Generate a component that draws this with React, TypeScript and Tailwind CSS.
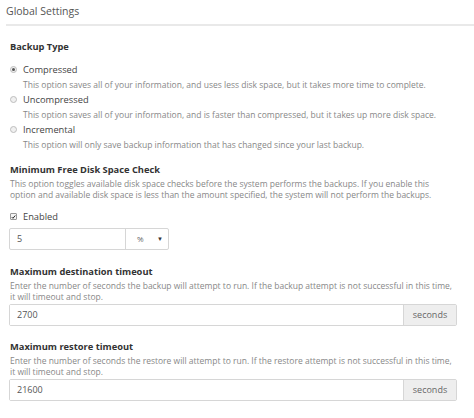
import React from "react";

function Radio({ checked }: { checked?: boolean }) {
  return (
    <span className="relative inline-flex w-[7px] h-[7px] rounded-full border border-[#bdbdbd] bg-[#f0f0f0] items-center justify-center shrink-0">
      {checked && <span className="w-[3px] h-[3px] rounded-full bg-[#555]" />}
    </span>
  );
}

function Check() {
  return (
    <span className="inline-flex w-[7px] h-[7px] border border-[#999] bg-[#f5f5f5] rounded-[1px] items-center justify-center shrink-0">
      <svg width="6" height="6" viewBox="0 0 8 8">
        <path d="M1.2 4.2 L3.1 6.1 L6.8 1.6" fill="none" stroke="#222" strokeWidth="1.6" />
      </svg>
    </span>
  );
}

function Option({ label, desc, checked }: { label: string; desc: string; checked?: boolean }) {
  return (
    <div>
      <div className="flex items-center h-[15px]">
        <Radio checked={checked} />
        <span className="ml-[6px] text-[9.3px] text-[#444]">{label}</span>
      </div>
      <div className="pl-[13px] text-[8.5px] leading-[15px] text-[#888] whitespace-nowrap">{desc}</div>
    </div>
  );
}

function Heading({ children, className = "" }: { children: React.ReactNode; className?: string }) {
  return <div className={"text-[9.3px] leading-[14px] font-bold text-[#333] " + className}>{children}</div>;
}

function Desc({ children, className = "" }: { children: React.ReactNode; className?: string }) {
  return <div className={"text-[8.5px] leading-[10.5px] text-[#888] whitespace-nowrap " + className}>{children}</div>;
}

function SecondsInput({ value, className = "" }: { value: string; className?: string }) {
  return (
    <div className={"flex h-[22px] w-[448px] ml-[-1px] border border-[#d6d6d6] rounded-[2px] " + className}>
      <div className="flex-1 flex items-center pl-[7px] text-[9px] text-[#555] bg-white">{value}</div>
      <div className="w-[53px] flex items-center justify-center border-l border-[#d6d6d6] bg-[#eeeeee] text-[9px] text-[#666]">
        seconds
      </div>
    </div>
  );
}

export default function App() {
  return (
    <div className="w-[474px] h-[418px] bg-white overflow-hidden" style={{ fontFamily: '"Open Sans", "Noto Sans", sans-serif' }}>
      <div className="ml-[6px] h-[26px] flex items-center border-b-2 border-[#e9e9e9] text-[10.5px] text-[#555]">
        Global Settings
      </div>
      <div className="pl-[10px]">
        <Heading className="mt-[14px]">Backup Type</Heading>
        <div className="mt-[8px]">
          <Option
            checked
            label="Compressed"
            desc="This option saves all of your information, and uses less disk space, but it takes more time to complete."
          />
          <Option
            label="Uncompressed"
            desc="This option saves all of your information, and is faster than compressed, but it takes up more disk space."
          />
          <Option
            label="Incremental"
            desc="This option will only save backup information that has changed since your last backup."
          />
        </div>

        <Heading className="mt-[11px]">Minimum Free Disk Space Check</Heading>
        <Desc className="mt-[2px]">
          This option toggles available disk space checks before the system performs the backups. If you enable this
          <br />
          option and available disk space is less than the amount specified, the system will not perform the backups.
        </Desc>
        <div className="mt-[9px] flex items-center h-[15px]">
          <Check />
          <span className="ml-[6px] text-[9.3px] text-[#444]">Enabled</span>
        </div>
        <div className="mt-[4px] flex h-[22px] w-[160px] ml-[-1px] border border-[#d6d6d6] rounded-[2px]">
          <div className="w-[115px] flex items-center pl-[7px] text-[9px] text-[#555]">5</div>
          <div className="flex-1 flex items-center border-l border-[#d6d6d6] pl-[11px] pr-[5px] text-[8px] text-[#666]">
            <span>%</span>
            <span className="ml-auto text-[6px] text-[#333]">▼</span>
          </div>
        </div>

        <Heading className="mt-[15px]">Maximum destination timeout</Heading>
        <Desc className="mt-[2px]">
          Enter the number of seconds the backup will attempt to run. If the backup attempt is not successful in this time,
          <br />
          it will timeout and stop.
        </Desc>
        <SecondsInput value="2700" className="mt-[2px]" />

        <Heading className="mt-[14px]">Maximum restore timeout</Heading>
        <Desc className="mt-[2px]">
          Enter the number of seconds the restore will attempt to run. If the restore attempt is not successful in this time,
          <br />
          it will timeout and stop.
        </Desc>
        <SecondsInput value="21600" className="mt-[2px]" />
      </div>
    </div>
  );
}
